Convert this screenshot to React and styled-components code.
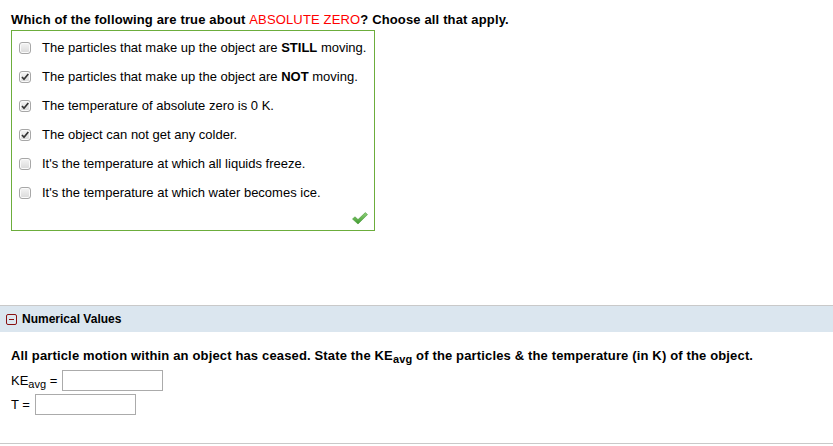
import React from "react";
import styled, { createGlobalStyle } from "styled-components";

const GlobalStyle = createGlobalStyle`
  html, body {
    margin: 0;
    padding: 0;
    background: #ffffff;
    font-family: "Liberation Sans", Arial, sans-serif;
    font-size: 13px;
    color: #000;
  }
`;

const Page = styled.div`
  width: 833px;
  height: 446px;
  overflow: hidden;
  position: relative;
`;

const QuestionBlock = styled.div`
  padding: 12px 0 0 11px;
`;

const Title = styled.div`
  font-weight: bold;
  font-size: 13px;
  line-height: 15px;
  height: 18px;
  letter-spacing: 0.15px;
`;

const Red = styled.span`
  color: #ff0000;
  font-weight: normal;
`;

const AnswerBox = styled.div`
  position: relative;
  box-sizing: border-box;
  width: 364px;
  height: 201px;
  border: 1px solid #6cad3c;
  padding-top: 2px;
`;

const Option = styled.label`
  display: flex;
  align-items: center;
  height: 29px;
  padding-left: 7px;
  gap: 11px;
  font-size: 13px;
`;

const Box = styled.span`
  position: relative;
  box-sizing: border-box;
  width: 12px;
  height: 12px;
  flex: none;
  border: 1px solid #a7a7a7;
  border-radius: 3px;
  background: linear-gradient(#f4f4f4, #d9d9d9);
  box-shadow: inset 0 0 0 1px #fafafa;
`;

const Tick = styled.svg`
  position: absolute;
  left: 0;
  top: 0;
`;

const Checkbox = ({ checked }) => (
  <Box>
    {checked && (
      <Tick width="10" height="10" viewBox="0 0 10 10">
        <path d="M2 5 L4 7.2 L8.3 2" fill="none" stroke="#333" strokeWidth="1.7" />
      </Tick>
    )}
  </Box>
);

const CorrectMark = styled.svg`
  position: absolute;
  right: 6px;
  bottom: 5px;
`;

const Section = styled.div`
  margin-top: 74px;
`;

const SectionHeader = styled.div`
  box-sizing: border-box;
  height: 27px;
  border-top: 1px solid #c9c9c9;
  background: #dbe6ef;
  display: flex;
  align-items: center;
  padding-left: 6px;
  gap: 5px;
  font-weight: bold;
  font-size: 12px;
`;

const Collapse = styled.span`
  box-sizing: border-box;
  width: 11px;
  height: 11px;
  border: 1px solid #8a1111;
  border-radius: 2px;
  display: flex;
  align-items: center;
  justify-content: center;
  &::after {
    content: "";
    width: 5px;
    height: 1px;
    background: #8a1111;
  }
`;

const SectionBody = styled.div`
  padding: 16px 0 0 11px;
  height: 112px;
  box-sizing: border-box;
  border-bottom: 1px solid #c9c9c9;
`;

const Prompt = styled.div`
  font-weight: bold;
  font-size: 13px;
  line-height: 15px;
  letter-spacing: 0.15px;
  margin-bottom: 5px;
`;

const Field = styled.div`
  display: flex;
  align-items: center;
  height: 24px;
  gap: 5px;
  font-size: 13px;
`;

const Sub = styled.sub`
  font-size: 11px;
  vertical-align: -3px;
  line-height: 0;
`;

const Input = styled.input`
  box-sizing: border-box;
  width: 101px;
  height: 21px;
  border: 1px solid #ababab;
  padding: 0 2px;
  font: inherit;
  outline: none;
`;

const options = [
  { text: <>The particles that make up the object are <b>STILL</b> moving.</>, checked: false },
  { text: <>The particles that make up the object are <b>NOT</b> moving.</>, checked: true },
  { text: "The temperature of absolute zero is 0 K.", checked: true },
  { text: "The object can not get any colder.", checked: true },
  { text: "It's the temperature at which all liquids freeze.", checked: false },
  { text: "It's the temperature at which water becomes ice.", checked: false },
];

export default function App() {
  return (
    <Page>
      <GlobalStyle />
      <QuestionBlock>
        <Title>
          Which of the following are true about <Red>ABSOLUTE ZERO</Red>? Choose all that apply.
        </Title>
        <AnswerBox>
          {options.map((o, i) => (
            <Option key={i}>
              <Checkbox checked={o.checked} />
              <span>{o.text}</span>
            </Option>
          ))}
          <CorrectMark width="16" height="13" viewBox="0 0 16 13">
            <defs>
              <linearGradient id="g" x1="0" y1="0" x2="0" y2="1">
                <stop offset="0" stopColor="#8fd17a" />
                <stop offset="1" stopColor="#3f9a2e" />
              </linearGradient>
            </defs>
            <path d="M0.5 7 L3 4.8 L6 7.6 L13.3 0.6 L15.5 2.6 L6 12 Z" fill="url(#g)" stroke="#4a9a3a" strokeWidth="0.6" />
          </CorrectMark>
        </AnswerBox>
      </QuestionBlock>
      <Section>
        <SectionHeader>
          <Collapse />
          Numerical Values
        </SectionHeader>
        <SectionBody>
          <Prompt>
            All particle motion within an object has ceased. State the KE<Sub>avg</Sub> of the
            particles &amp; the temperature (in K) of the object.
          </Prompt>
          <Field>
            <span>KE<Sub>avg</Sub> =</span>
            <Input />
          </Field>
          <Field>
            <span>T =</span>
            <Input />
          </Field>
        </SectionBody>
      </Section>
    </Page>
  );
}
